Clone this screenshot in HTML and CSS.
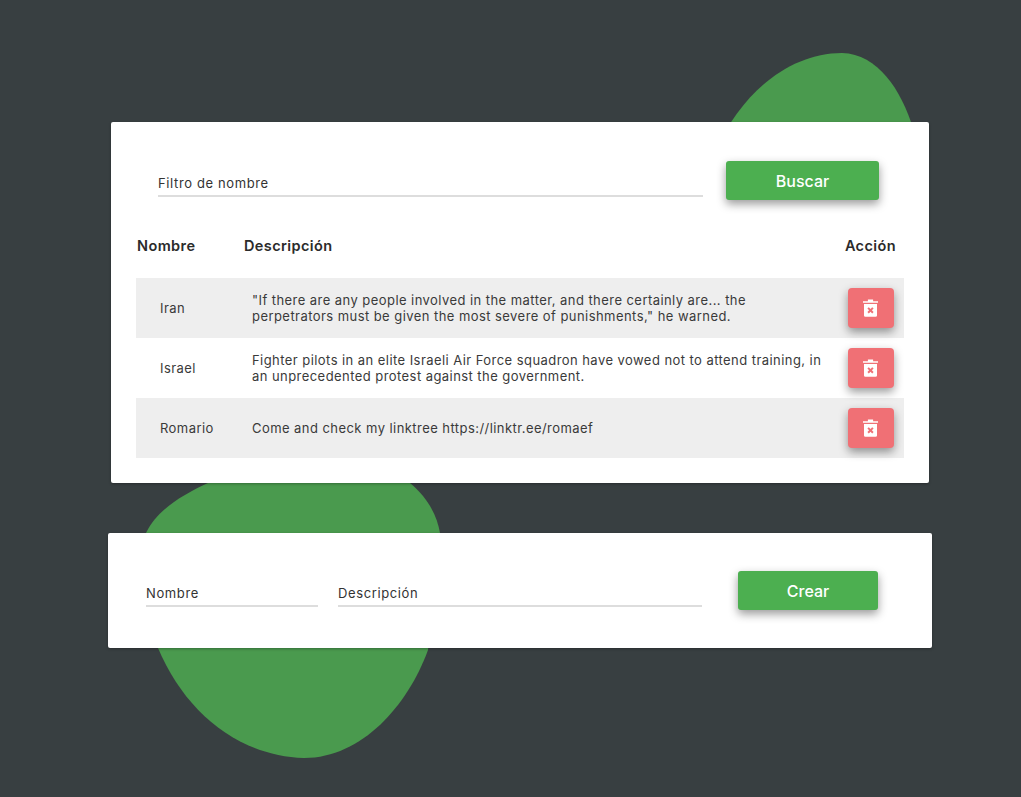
FILE: index.html
```html
<!DOCTYPE html>
<html lang="es">
<head>
    <meta charset="UTF-8">
    <meta name="viewport" content="width=device-width, initial-scale=1.0">
    <title>Crud</title>
    <link rel="stylesheet" href="styles.css">
</head>
<body>

    <!-- Manchas verdes del fondo -->
    <svg class="blobs" width="1021" height="797" viewBox="0 0 1021 797" aria-hidden="true">
        <path d="M716 150 C742 92 790 53 842 53 C878 54 901 90 913 128 L913 200 L716 200 Z"/>
        <path d="M146 533 C157 510 182 495 208 483 L410 483 C427 497 437 515 440 533 L428 650 C408 705 362 758 304 758 C238 756 185 712 158 648 Z"/>
    </svg>

    <main class="page">
        <section class="card card-list">
            <form class="search-row">
                <input class="field field-filter" type="text" placeholder="Filtro de nombre">
                <button class="btn btn-search" type="button">Buscar</button>
            </form>

            <div class="table-head">
                <span class="col-name">Nombre</span>
                <span class="col-desc">Descripción</span>
                <span class="col-action">Acción</span>
            </div>

            <div class="row row-odd">
                <span class="cell-name">Iran</span>
                <p class="cell-desc">"If there are any people involved in the matter, and there certainly are... the<br>perpetrators must be given the most severe of punishments," he warned.</p>
                <button class="btn-delete" type="button" aria-label="Eliminar">
                    <svg width="15" height="18" viewBox="0 0 15 18"><path d="M0 2.2h4.9V.6h5.2v1.6H15v1.6H0z"/><path fill-rule="evenodd" d="M1 5h13v11.4a1.4 1.4 0 0 1-1.4 1.4H2.4A1.4 1.4 0 0 1 1 16.4zM5.8 8.2 4.4 9.6l1.7 1.7-1.7 1.7 1.4 1.4 1.7-1.7 1.7 1.7 1.4-1.4-1.7-1.7 1.7-1.7-1.4-1.4-1.7 1.7z"/></svg>
                </button>
            </div>
            <div class="row">
                <span class="cell-name">Israel</span>
                <p class="cell-desc">Fighter pilots in an elite Israeli Air Force squadron have vowed not to attend training, in<br>an unprecedented protest against the government.</p>
                <button class="btn-delete" type="button" aria-label="Eliminar">
                    <svg width="15" height="18" viewBox="0 0 15 18"><path d="M0 2.2h4.9V.6h5.2v1.6H15v1.6H0z"/><path fill-rule="evenodd" d="M1 5h13v11.4a1.4 1.4 0 0 1-1.4 1.4H2.4A1.4 1.4 0 0 1 1 16.4zM5.8 8.2 4.4 9.6l1.7 1.7-1.7 1.7 1.4 1.4 1.7-1.7 1.7 1.7 1.4-1.4-1.7-1.7 1.7-1.7-1.4-1.4-1.7 1.7z"/></svg>
                </button>
            </div>
            <div class="row row-odd">
                <span class="cell-name">Romario</span>
                <p class="cell-desc">Come and check my linktree https://linktr.ee/romaef</p>
                <button class="btn-delete" type="button" aria-label="Eliminar">
                    <svg width="15" height="18" viewBox="0 0 15 18"><path d="M0 2.2h4.9V.6h5.2v1.6H15v1.6H0z"/><path fill-rule="evenodd" d="M1 5h13v11.4a1.4 1.4 0 0 1-1.4 1.4H2.4A1.4 1.4 0 0 1 1 16.4zM5.8 8.2 4.4 9.6l1.7 1.7-1.7 1.7 1.4 1.4 1.7-1.7 1.7 1.7 1.4-1.4-1.7-1.7 1.7-1.7-1.4-1.4-1.7 1.7z"/></svg>
                </button>
            </div>
        </section>

        <section class="card card-create">
            <input class="field field-name" type="text" placeholder="Nombre">
            <input class="field field-desc" type="text" placeholder="Descripción">
            <button class="btn btn-create" type="button">Crear</button>
        </section>
    </main>

</body>
</html>
```

FILE: styles.css
```css
body {
    margin: 0;
    height: 797px;
    overflow: hidden;
    background-color: #383f41;
    font-family: Inter, "Liberation Sans", sans-serif;
    color: #333;
}
.blobs {
    position: absolute;
    top: 0;
    left: 0;
}
.blobs path {
    fill: #4a9a4e;
}
.page {
    position: relative;
    display: flex;
    flex-direction: column;
    align-items: center;
    gap: 50px;
    padding: 122px 0 0 19px;
}
.card {
    box-sizing: border-box;
    background: #fff;
    border-radius: 2px;
    box-shadow: 0 1px 3px rgba(0, 0, 0, 0.3);
}
.card-list {
    width: 818px;
    height: 361px;
    padding: 39px 25px 0;
}
.card-create {
    display: flex;
    align-items: flex-start;
    width: 824px;
    height: 115px;
    padding: 38px 0 0 38px;
}
.search-row {
    display: flex;
    align-items: flex-start;
    padding-left: 22px;
}
.field {
    box-sizing: border-box;
    height: 36px;
    padding: 10px 0 0;
    border: none;
    border-bottom: 2px solid #ddd;
    outline: none;
    background: transparent;
    font-family: inherit;
    font-size: 13px;
    letter-spacing: 0.62px;
    color: #333;
}
.field::placeholder {
    color: #333;
    opacity: 1;
}
.field-filter {
    width: 545px;
}
.field-name {
    width: 172px;
}
.field-desc {
    width: 364px;
    margin-left: 20px;
}
.btn {
    height: 39px;
    border: none;
    border-radius: 3px;
    background-color: #4caf50;
    color: #fff;
    font-family: inherit;
    font-size: 16px;
    font-weight: 500;
    box-shadow: 0 4px 10px rgba(0, 0, 0, 0.4);
    cursor: pointer;
}
.btn-search {
    width: 153px;
    margin-left: 23px;
}
.btn-create {
    width: 140px;
    margin-left: 36px;
}
.table-head {
    display: flex;
    align-items: center;
    height: 39px;
    margin-top: 26px;
    margin-bottom: 13px;
    padding: 0 8px 0 1px;
    font-size: 14.5px;
    font-weight: 600;
    letter-spacing: 0.4px;
    color: #2b2b2b;
    line-height: 17px;
}
.col-name {
    width: 107px;
}
.col-desc {
    flex: 1;
}
.row {
    display: flex;
    align-items: center;
    height: 60px;
    padding: 0 10px 0 24px;
    font-size: 13px;
    letter-spacing: 0.44px;
    color: #3a3a3a;
}
.row-odd {
    background-color: #eee;
}
.cell-name {
    width: 92px;
}
.cell-desc {
    flex: 1;
    margin: 0;
    line-height: 16px;
}
.btn-delete {
    display: flex;
    align-items: center;
    justify-content: center;
    width: 46px;
    height: 40px;
    padding: 0 2px 0 0;
    border: none;
    border-radius: 4px;
    background-color: #f07075;
    box-shadow: 0 4px 10px rgba(0, 0, 0, 0.4);
    cursor: pointer;
}
.btn-delete svg {
    fill: #fff;
}
```
